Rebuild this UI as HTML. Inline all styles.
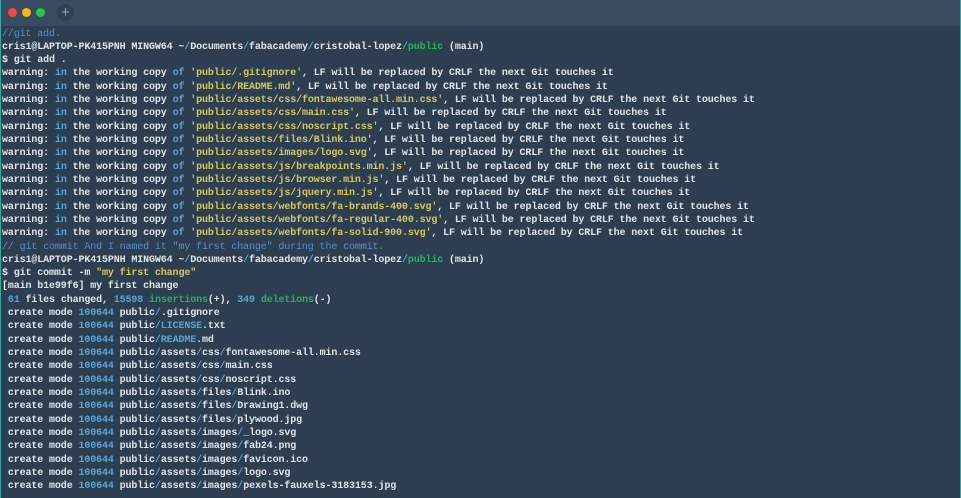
<!DOCTYPE html>
<html><head><meta charset="utf-8"><style>
html,body{margin:0;padding:0;width:961px;height:498px;overflow:hidden;background:#2c3e50;}
.bar{position:absolute;left:0;top:0;width:961px;height:26px;background:#394b5e;}
.dot{position:absolute;top:8px;width:9px;height:9px;border-radius:50%;}
.plus{position:absolute;left:57px;top:4px;width:17px;height:17px;border-radius:50%;background:#2f4052;color:#9aa7b3;font:15px/17px "Liberation Sans",sans-serif;text-align:center;}
.edge{position:absolute;left:0;top:0;width:1px;height:498px;background:#3aa7a0;}
.edge2{position:absolute;right:0;top:0;width:1px;height:498px;background:#3aa7a0;}
pre{position:absolute;left:2px;top:27.5px;margin:0;font:bold 10px/13.32px "Liberation Mono",monospace;color:#e2e6ea;letter-spacing:-0.12px;}
.c{color:#5aa5d8}.y{color:#d6c766}.g{color:#2fae62}.cm{color:#5b8fc8;font-weight:normal}
</style></head><body>
<div class="bar"></div>
<div class="dot" style="left:8px;background:#ee4c4c"></div>
<div class="dot" style="left:22px;background:#f5b52a"></div>
<div class="dot" style="left:36px;background:#2cc44d"></div>
<div class="plus">+</div>
<div class="edge"></div><div class="edge2"></div>
<pre><span class="cm">//git add.</span>
cris1@LAPTOP-PK415PNH MINGW64 ~<span class="c">/</span>Documents<span class="c">/</span>fabacademy<span class="c">/</span>cristobal-lopez<span class="c">/</span><span class="g">public</span> (main)
$ git add .
warning: <span class="c">in</span> the working copy <span class="c">of</span> <span class="y">'public/.gitignore'</span>, LF will be replaced by CRLF the next Git touches it
warning: <span class="c">in</span> the working copy <span class="c">of</span> <span class="y">'public/README.md'</span>, LF will be replaced by CRLF the next Git touches it
warning: <span class="c">in</span> the working copy <span class="c">of</span> <span class="y">'public/assets/css/fontawesome-all.min.css'</span>, LF will be replaced by CRLF the next Git touches it
warning: <span class="c">in</span> the working copy <span class="c">of</span> <span class="y">'public/assets/css/main.css'</span>, LF will be replaced by CRLF the next Git touches it
warning: <span class="c">in</span> the working copy <span class="c">of</span> <span class="y">'public/assets/css/noscript.css'</span>, LF will be replaced by CRLF the next Git touches it
warning: <span class="c">in</span> the working copy <span class="c">of</span> <span class="y">'public/assets/files/Blink.ino'</span>, LF will be replaced by CRLF the next Git touches it
warning: <span class="c">in</span> the working copy <span class="c">of</span> <span class="y">'public/assets/images/logo.svg'</span>, LF will be replaced by CRLF the next Git touches it
warning: <span class="c">in</span> the working copy <span class="c">of</span> <span class="y">'public/assets/js/breakpoints.min.js'</span>, LF will be replaced by CRLF the next Git touches it
warning: <span class="c">in</span> the working copy <span class="c">of</span> <span class="y">'public/assets/js/browser.min.js'</span>, LF will be replaced by CRLF the next Git touches it
warning: <span class="c">in</span> the working copy <span class="c">of</span> <span class="y">'public/assets/js/jquery.min.js'</span>, LF will be replaced by CRLF the next Git touches it
warning: <span class="c">in</span> the working copy <span class="c">of</span> <span class="y">'public/assets/webfonts/fa-brands-400.svg'</span>, LF will be replaced by CRLF the next Git touches it
warning: <span class="c">in</span> the working copy <span class="c">of</span> <span class="y">'public/assets/webfonts/fa-regular-400.svg'</span>, LF will be replaced by CRLF the next Git touches it
warning: <span class="c">in</span> the working copy <span class="c">of</span> <span class="y">'public/assets/webfonts/fa-solid-900.svg'</span>, LF will be replaced by CRLF the next Git touches it
<span class="cm">// git commit And I named it "my first change" during the commit.</span>
cris1@LAPTOP-PK415PNH MINGW64 ~<span class="c">/</span>Documents<span class="c">/</span>fabacademy<span class="c">/</span>cristobal-lopez<span class="c">/</span><span class="g">public</span> (main)
$ git commit -m <span class="y">"my first change"</span>
[main b1e99f6] my first change
 <span class="c">61</span> files changed, <span class="c">15598</span> <span class="g">insertions</span>(+), <span class="c">349</span> <span class="g">deletions</span>(-)
 create mode <span class="c">100644</span> public<span class="c">/</span>.gitignore
 create mode <span class="c">100644</span> public<span class="c">/LICENSE</span>.txt
 create mode <span class="c">100644</span> public<span class="c">/README</span>.md
 create mode <span class="c">100644</span> public<span class="c">/</span>assets<span class="c">/</span>css<span class="c">/</span>fontawesome-all.min.css
 create mode <span class="c">100644</span> public<span class="c">/</span>assets<span class="c">/</span>css<span class="c">/</span>main.css
 create mode <span class="c">100644</span> public<span class="c">/</span>assets<span class="c">/</span>css<span class="c">/</span>noscript.css
 create mode <span class="c">100644</span> public<span class="c">/</span>assets<span class="c">/</span>files<span class="c">/</span>Blink.ino
 create mode <span class="c">100644</span> public<span class="c">/</span>assets<span class="c">/</span>files<span class="c">/</span>Drawing1.dwg
 create mode <span class="c">100644</span> public<span class="c">/</span>assets<span class="c">/</span>files<span class="c">/</span>plywood.jpg
 create mode <span class="c">100644</span> public<span class="c">/</span>assets<span class="c">/</span>images<span class="c">/</span>_logo.svg
 create mode <span class="c">100644</span> public<span class="c">/</span>assets<span class="c">/</span>images<span class="c">/</span>fab24.png
 create mode <span class="c">100644</span> public<span class="c">/</span>assets<span class="c">/</span>images<span class="c">/</span>favicon.ico
 create mode <span class="c">100644</span> public<span class="c">/</span>assets<span class="c">/</span>images<span class="c">/</span>logo.svg
 create mode <span class="c">100644</span> public<span class="c">/</span>assets<span class="c">/</span>images<span class="c">/</span>pexels-fauxels-3183153.jpg</pre>
</body></html>
